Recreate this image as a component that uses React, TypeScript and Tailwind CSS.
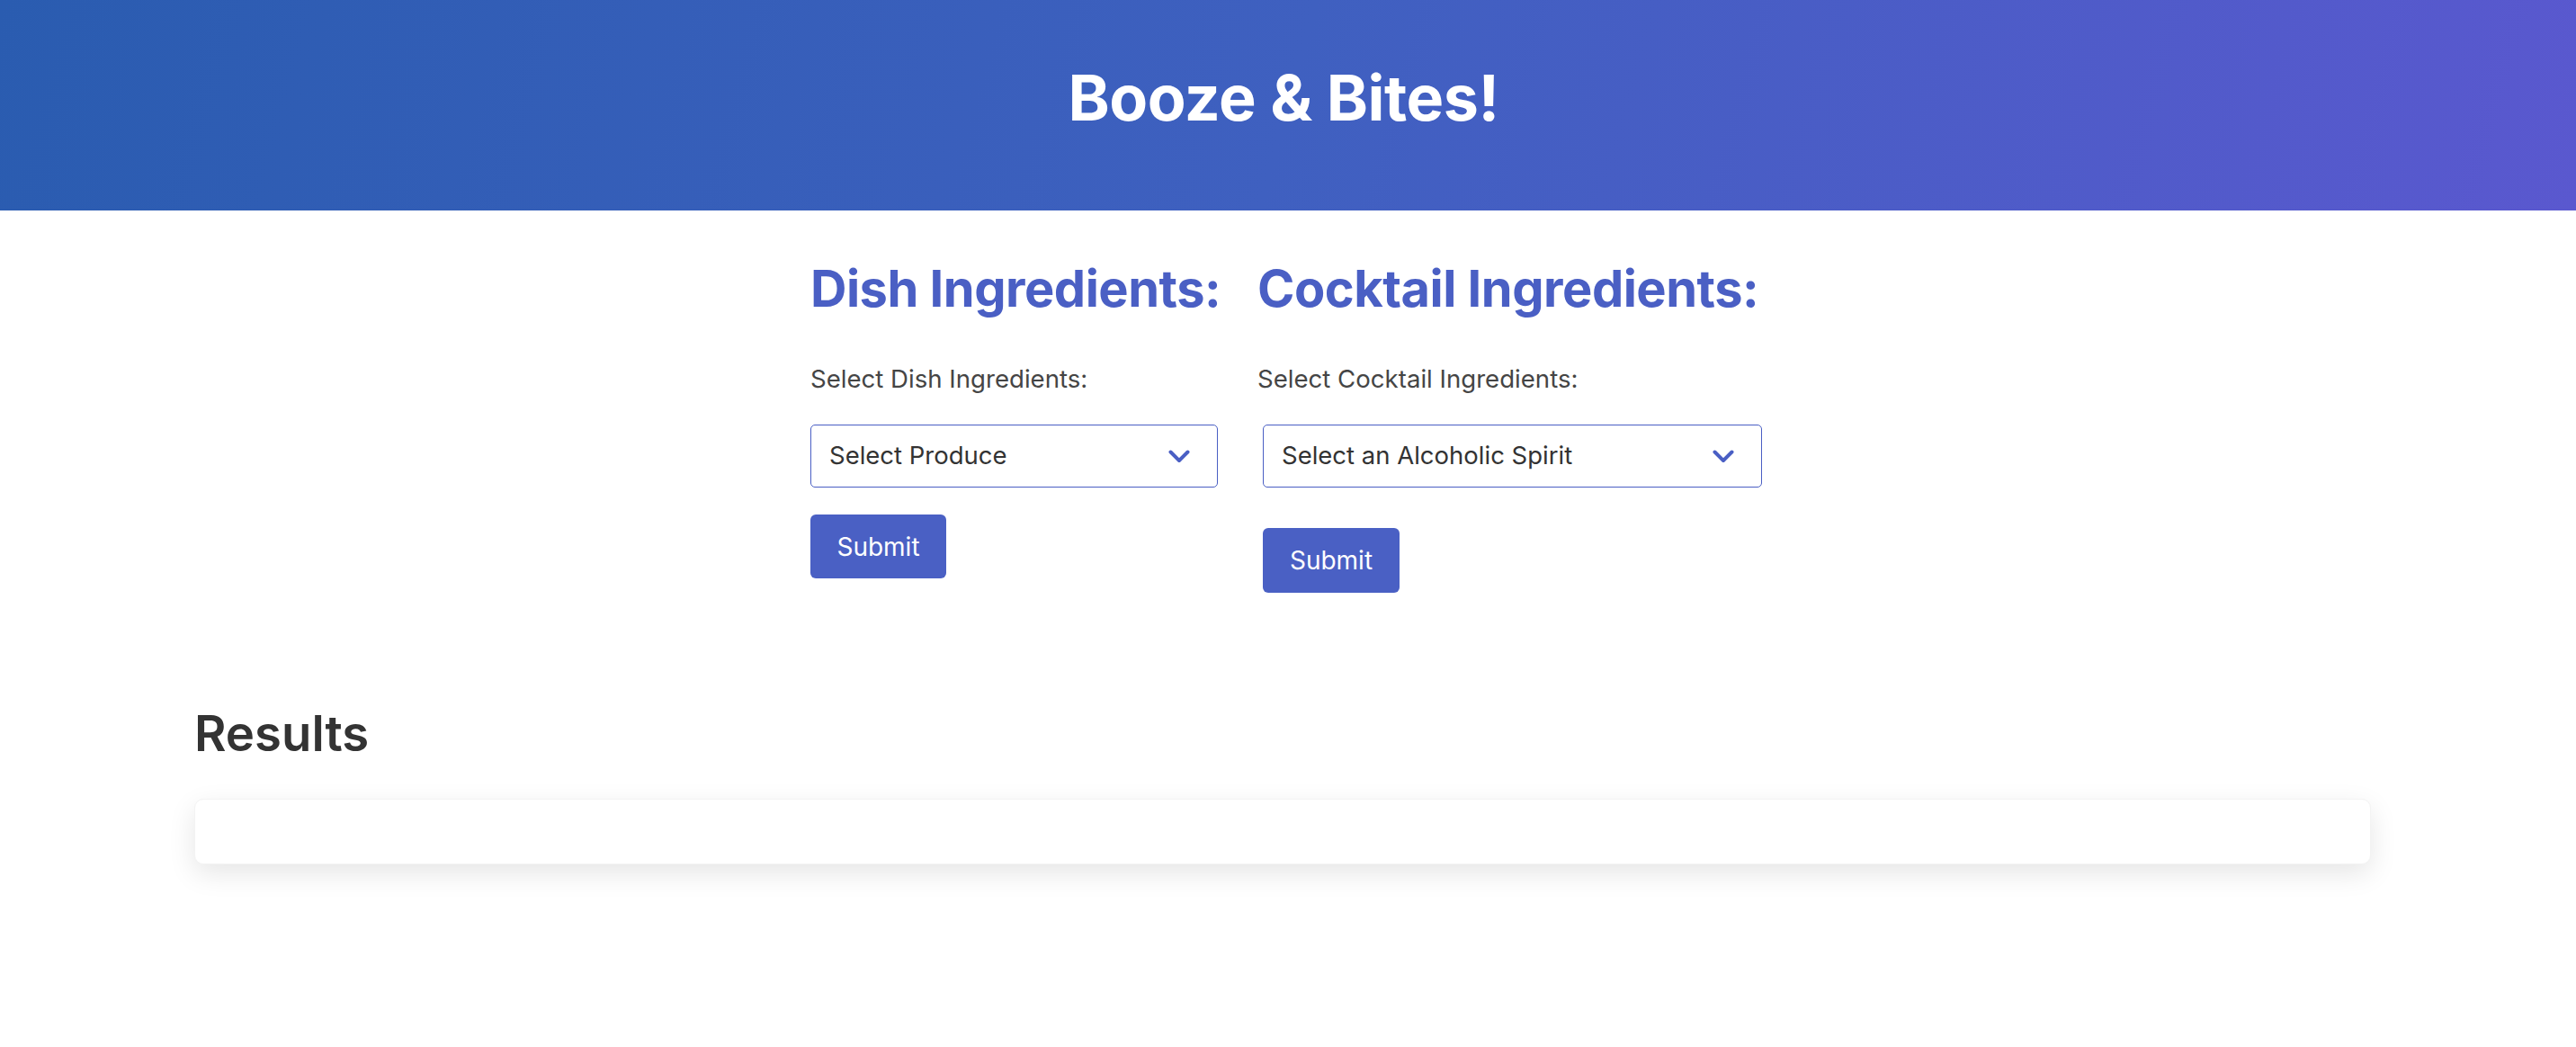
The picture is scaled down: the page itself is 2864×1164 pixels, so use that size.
function Chevron() {
  return (
    <svg width="24" height="15" viewBox="0 0 24 15" fill="none" className="shrink-0">
      <polyline
        points="2.5,2.5 12,12 21.5,2.5"
        stroke="#4a5fc4"
        strokeWidth="4"
        strokeLinecap="round"
        strokeLinejoin="round"
      />
    </svg>
  );
}

function FakeSelect({ label, className }: { label: string; className: string }) {
  return (
    <div
      className={`h-[70px] flex items-center justify-between pl-[20px] pr-[30px] border border-[#4a5fc4] rounded-[5px] bg-white text-[27.5px] text-[#333333] ${className}`}
    >
      <span>{label}</span>
      <Chevron />
    </div>
  );
}

function SubmitButton({ className }: { className: string }) {
  return (
    <button
      className={`w-[151px] h-[71px] rounded-[6px] bg-[#4a60c4] text-white text-[28px] flex items-center justify-center ${className}`}
    >
      Submit
    </button>
  );
}

export default function App() {
  return (
    <div className="min-h-screen bg-white font-['Inter',sans-serif]">
      {/* Header */}
      <header className="h-[234px] bg-linear-[105deg] from-[#2a5cb0] via-[#3f60c0] to-[#5a58cf] flex justify-center pr-[10px]">
        <h1 className="pt-[66px] text-[70px] leading-[85px] font-bold text-white tracking-[-0.5px]">
          Booze &amp; Bites!
        </h1>
      </header>

      {/* Forms */}
      <section className="flex justify-center gap-[44px] pr-[4px]">
        <div className="w-[453px] flex flex-col items-start">
          <h2 className="mt-[53px] text-[56px] leading-[68px] font-bold text-[#4a5fc4] tracking-[-0.5px] whitespace-nowrap">
            Dish Ingredients:
          </h2>
          <p className="mt-[50px] text-[27.6px] leading-[33px] text-[#454545]">Select Dish Ingredients:</p>
          <FakeSelect label="Select Produce" className="mt-[34px] w-[453px]" />
          <SubmitButton className="mt-[30px]" />
        </div>

        <div className="w-[561px] flex flex-col items-start">
          <h2 className="mt-[53px] text-[56px] leading-[68px] font-bold text-[#4a5fc4] tracking-[-0.5px] whitespace-nowrap">
            Cocktail Ingredients:
          </h2>
          <p className="mt-[50px] text-[27.6px] leading-[33px] text-[#454545]">Select Cocktail Ingredients:</p>
          <FakeSelect label="Select an Alcoholic Spirit" className="mt-[34px] ml-[6px] w-[555px]" />
          <SubmitButton className="mt-[45px] ml-[6px] w-[152px] h-[72px]" />
        </div>
      </section>

      {/* Results */}
      <section className="ml-[216px] w-[2420px] mt-[122px]">
        <h2 className="text-[54.5px] leading-[68px] font-semibold text-[#333333]">Results</h2>
        <div className="mt-[39px] h-[73px] rounded-[10px] bg-white border border-[#f3f3f3] shadow-[0_10px_30px_rgba(0,0,0,0.10)]" />
      </section>
    </div>
  );
}
